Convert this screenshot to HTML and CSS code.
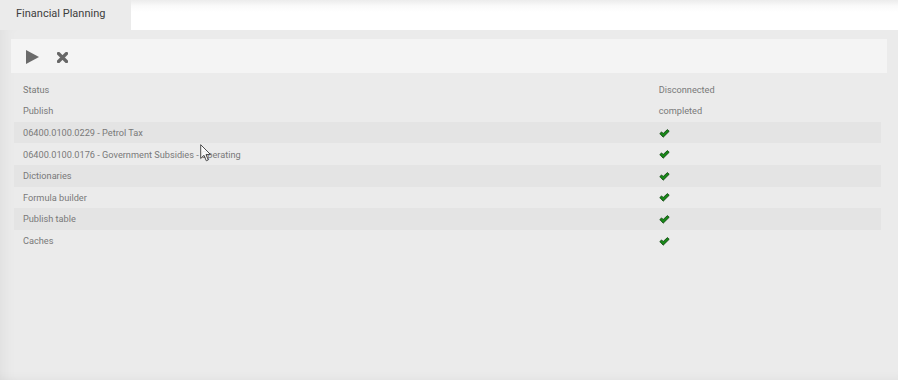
FILE: index.html
```html
<!DOCTYPE html>
<html>
<head>
<meta charset="utf-8">
<link rel="stylesheet" href="styles.css">
</head>
<body>
<div class="tabs">
  <div class="tab">Financial Planning</div>
  <div class="tab-rest"></div>
</div>
<div class="panel">
  <div class="toolbar">
    <svg class="icon-play" width="13" height="14" viewBox="0 0 13 14"><path d="M0 0 L13 7 L0 14 Z" fill="#6a6a6a"/></svg>
    <svg class="icon-x" width="11" height="11" viewBox="0 0 11 11"><path d="M1.5 1.5 L9.5 9.5 M9.5 1.5 L1.5 9.5" stroke="#666" stroke-width="3.2" stroke-linecap="round"/></svg>
  </div>
  <div class="table">
    <div class="row"><div class="name">Status</div><div class="val">Disconnected</div></div>
    <div class="row"><div class="name">Publish</div><div class="val">completed</div></div>
    <div class="row alt"><div class="name">06400.0100.0229 - Petrol Tax</div><div class="val"><svg class="check" width="11" height="9" viewBox="0 0 11 9"><path d="M0.8 4.6 L2.6 2.9 L4.2 4.5 L8.4 0.6 L10.2 2.3 L4.2 8.2 Z" fill="#178a17" stroke="#0c3d0c" stroke-width="0.8" stroke-linejoin="round"/></svg></div></div>
    <div class="row"><div class="name">06400.0100.0176 - Government Subsidies - Operating</div><div class="val"><svg class="check" width="11" height="9" viewBox="0 0 11 9"><path d="M0.8 4.6 L2.6 2.9 L4.2 4.5 L8.4 0.6 L10.2 2.3 L4.2 8.2 Z" fill="#178a17" stroke="#0c3d0c" stroke-width="0.8" stroke-linejoin="round"/></svg></div></div>
    <div class="row alt"><div class="name">Dictionaries</div><div class="val"><svg class="check" width="11" height="9" viewBox="0 0 11 9"><path d="M0.8 4.6 L2.6 2.9 L4.2 4.5 L8.4 0.6 L10.2 2.3 L4.2 8.2 Z" fill="#178a17" stroke="#0c3d0c" stroke-width="0.8" stroke-linejoin="round"/></svg></div></div>
    <div class="row"><div class="name">Formula builder</div><div class="val"><svg class="check" width="11" height="9" viewBox="0 0 11 9"><path d="M0.8 4.6 L2.6 2.9 L4.2 4.5 L8.4 0.6 L10.2 2.3 L4.2 8.2 Z" fill="#178a17" stroke="#0c3d0c" stroke-width="0.8" stroke-linejoin="round"/></svg></div></div>
    <div class="row alt"><div class="name">Publish table</div><div class="val"><svg class="check" width="11" height="9" viewBox="0 0 11 9"><path d="M0.8 4.6 L2.6 2.9 L4.2 4.5 L8.4 0.6 L10.2 2.3 L4.2 8.2 Z" fill="#178a17" stroke="#0c3d0c" stroke-width="0.8" stroke-linejoin="round"/></svg></div></div>
    <div class="row"><div class="name">Caches</div><div class="val"><svg class="check" width="11" height="9" viewBox="0 0 11 9"><path d="M0.8 4.6 L2.6 2.9 L4.2 4.5 L8.4 0.6 L10.2 2.3 L4.2 8.2 Z" fill="#178a17" stroke="#0c3d0c" stroke-width="0.8" stroke-linejoin="round"/></svg></div></div>
  </div>
  <svg class="cursor" width="12" height="18" viewBox="0 0 12 18"><path d="M0.7 0.7 L0.7 14.5 L4 11.3 L6.3 16.8 L8.3 15.9 L6 10.6 L10.6 10.6 Z" fill="#fff" stroke="#333" stroke-width="1" stroke-linejoin="round" opacity="0.85"/></svg>
</div>
</body>
</html>
```
FILE: styles.css
```css
* { box-sizing: border-box; }
html, body { margin: 0; padding: 0; }
body {
  width: 898px;
  height: 380px;
  overflow: hidden;
  background: #ebebeb;
  font-family: Roboto, "Liberation Sans", sans-serif;
}
.tabs {
  display: flex;
  height: 30px;
}
.tab {
  width: 131px;
  background: #ebebeb;
  padding-left: 16px;
  line-height: 28px;
  font-size: 11px;
  color: #3d3d3d;
}
.tab-rest {
  flex: 1;
  background: linear-gradient(to bottom, #ececec 0px, #fafafa 6px, #ffffff 12px);
}
.panel {
  position: relative;
  height: 350px;
  padding: 9px 11px 0 11px;
  background: #ebebeb;
  box-shadow: inset 14px 0 14px -10px rgba(0,0,0,0.05), inset 0 -8px 8px -6px rgba(0,0,0,0.04);
}
.toolbar {
  display: flex;
  align-items: center;
  height: 34px;
  background: #f4f4f4;
  padding-left: 15px;
  gap: 18px;
}
.icon-play { margin-top: 1px; }
.icon-x { margin-top: 2px; }
.table {
  margin: 5.6px 6px 0 3px;
}
.row {
  display: grid;
  grid-template-columns: 644.7px 1fr;
  align-items: center;
  height: 21.6px;
  font-size: 9.2px;
  color: #797979;
}
.row.alt { background: #e4e4e4; }
.name { padding-left: 9px; }
.check { display: block; margin-top: 1px; }
.cursor {
  position: absolute;
  left: 200px;
  top: 114px;
}
```
